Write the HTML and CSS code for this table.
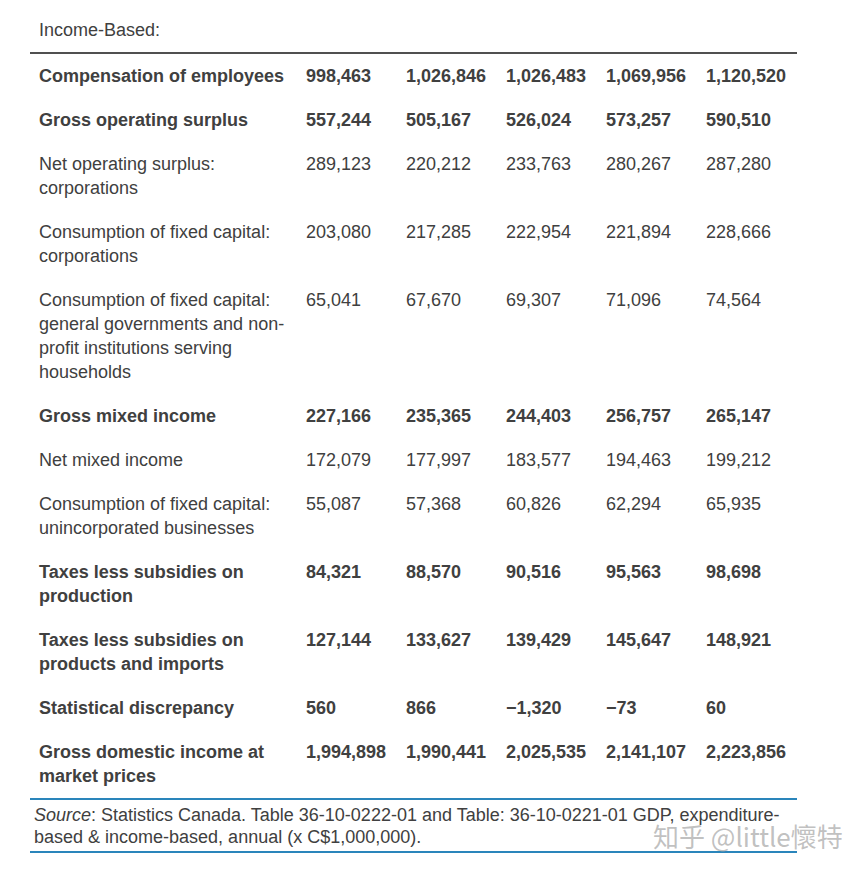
FILE: index.html
```html
<!DOCTYPE html>
<html>
<head>
<meta charset="utf-8">
<link rel="stylesheet" href="styles.css">
</head>
<body>
<div class="page">
  <table class="gdp">
    <colgroup>
      <col class="c-label"><col class="c-num"><col class="c-num"><col class="c-num"><col class="c-num"><col class="c-num">
    </colgroup>
    <thead>
      <tr><th class="title" colspan="6">Income-Based:</th></tr>
    </thead>
    <tbody>
      <tr class="b"><td>Compensation of employees</td><td>998,463</td><td>1,026,846</td><td>1,026,483</td><td>1,069,956</td><td>1,120,520</td></tr>
      <tr class="b"><td>Gross operating surplus</td><td>557,244</td><td>505,167</td><td>526,024</td><td>573,257</td><td>590,510</td></tr>
      <tr><td>Net operating surplus: corporations</td><td>289,123</td><td>220,212</td><td>233,763</td><td>280,267</td><td>287,280</td></tr>
      <tr><td>Consumption of fixed capital: corporations</td><td>203,080</td><td>217,285</td><td>222,954</td><td>221,894</td><td>228,666</td></tr>
      <tr><td>Consumption of fixed capital: general governments and non-profit institutions serving households</td><td>65,041</td><td>67,670</td><td>69,307</td><td>71,096</td><td>74,564</td></tr>
      <tr class="b"><td>Gross mixed income</td><td>227,166</td><td>235,365</td><td>244,403</td><td>256,757</td><td>265,147</td></tr>
      <tr><td>Net mixed income</td><td>172,079</td><td>177,997</td><td>183,577</td><td>194,463</td><td>199,212</td></tr>
      <tr><td>Consumption of fixed capital: unincorporated businesses</td><td>55,087</td><td>57,368</td><td>60,826</td><td>62,294</td><td>65,935</td></tr>
      <tr class="b"><td>Taxes less subsidies on production</td><td>84,321</td><td>88,570</td><td>90,516</td><td>95,563</td><td>98,698</td></tr>
      <tr class="b"><td>Taxes less subsidies on products and imports</td><td>127,144</td><td>133,627</td><td>139,429</td><td>145,647</td><td>148,921</td></tr>
      <tr class="b"><td>Statistical discrepancy</td><td>560</td><td>866</td><td>−1,320</td><td>−73</td><td>60</td></tr>
      <tr class="b"><td>Gross domestic income at market prices</td><td>1,994,898</td><td>1,990,441</td><td>2,025,535</td><td>2,141,107</td><td>2,223,856</td></tr>
    </tbody>
  </table>
  <div class="source">
    <p><em>Source</em>: Statistics Canada. Table 36-10-0222-01 and Table: 36-10-0221-01 GDP, expenditure-based &amp; income-based, annual (x C$1,000,000).</p>
    <span class="watermark">知乎 @little懷特</span>
  </div>
</div>
</body>
</html>
```
FILE: styles.css
```css
html, body {
  margin: 0;
  padding: 0;
  background: #ffffff;
}
.page {
  padding: 8px 0 0 30px;
  width: 767px;
  font-family: "Liberation Sans", Arial, sans-serif;
  color: #404040;
}
.gdp {
  width: 767px;
  border-collapse: collapse;
  table-layout: fixed;
  font-size: 18px;
  line-height: 24px;
}
.c-label { width: 267px; }
.c-num { width: 100px; }
.gdp th, .gdp td {
  padding: 10px 9px;
  text-align: left;
  vertical-align: top;
}
.gdp td { padding-right: 2px; }
.gdp th.title {
  font-weight: normal;
  border-bottom: 2px solid #505050;
}
.gdp tr.b td {
  font-weight: bold;
}
.source {
  position: relative;
  border-top: 2px solid #2a85bb;
  border-bottom: 2px solid #2a85bb;
  padding: 4px 4px 3px 4px;
  font-size: 18px;
  line-height: 22px;
}
.source p { margin: 0; }
.watermark {
  position: absolute;
  left: 623px;
  top: 21px;
  font-family: "Noto Sans CJK SC", "Liberation Sans", sans-serif;
  font-size: 26px;
  line-height: 30px;
  color: rgba(165, 165, 165, 0.7);
  white-space: nowrap;
}
```
